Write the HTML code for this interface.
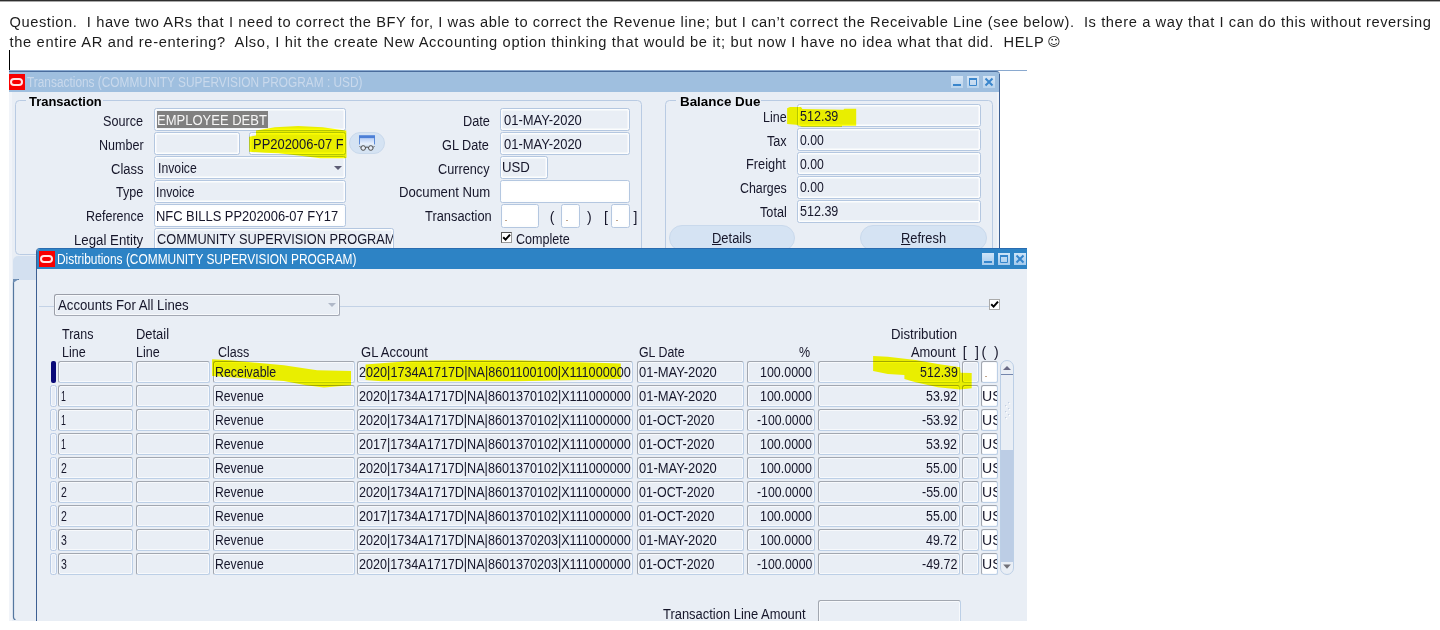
<!DOCTYPE html>
<html><head><meta charset="utf-8"><title>Question</title>
<style>
html,body{margin:0;padding:0;background:#fff;}
body{width:1440px;height:630px;overflow:hidden;position:relative;font-family:"Liberation Sans",sans-serif;font-size:14px;color:#000;}
.a{position:absolute;}
.q{position:absolute;left:9.5px;white-space:pre;font-size:14.67px;letter-spacing:0.586px;color:#1c1c1c;line-height:20px;}
.f{position:absolute;box-sizing:border-box;border:1px solid #b4c7e0;border-radius:2.5px;background:#e9eef5;box-shadow:inset 0 0 0 1.5px #fcfdfe;}
.f.wh{background:#fff;}
.f.t.dd{border-color:#9a9ea8 #a4a9b4 #a4a9b4 #9a9ea8;}
.f.t{border-color:#a2a7b0 #bccfe6 #bccfe6 #a2a7b0;box-shadow:inset 0 0 0 1px #f7f9fc;}
.x{position:absolute;white-space:pre;line-height:15px;height:15px;transform-origin:0 50%;color:#16162a;}
.c{position:absolute;overflow:hidden;height:15px;}
.b{font-weight:bold;color:#000;}
.g{position:absolute;box-sizing:border-box;border:1px solid #b9cbe3;border-radius:4.5px;}
.btn{position:absolute;box-sizing:border-box;height:26px;border-radius:13px;background:#d5e3f3;border:1px solid #c9d9ec;}
.tb{position:absolute;width:12px;height:12px;background:linear-gradient(#d6e6f6,#b9d3ec);}
.tb2{position:absolute;width:12px;height:12px;background:linear-gradient(#cfe5f8,#a3caed);}
.ora{position:absolute;width:15.5px;height:16px;background:#f80000;}
.ora i{position:absolute;left:1.2px;top:3.8px;width:9px;height:4.6px;border:2px solid #ffe4e4;border-radius:4.5px;}
</style></head><body>
<div class="a" style="left:0;top:0;width:1440px;height:1px;background:#2e2e2e"></div><div class="a" style="left:0;top:1px;width:1440px;height:1px;background:#a8a8a8"></div>
<div class="q" style="top:12px">Question.  I have two ARs that I need to correct the BFY for, I was able to correct the Revenue line; but I can’t correct the Receivable Line (see below).  Is there a way that I can do this without reversing</div>
<div class="q" style="top:31.5px;letter-spacing:0.666px">the entire AR and re-entering?  Also, I hit the create New Accounting option thinking that would be it; but now I have no idea what that did.  HELP <span style="font-family:'DejaVu Sans',sans-serif;font-size:12.8px;letter-spacing:0;line-height:10px;position:relative;top:-0.5px;left:-1.5px">☺</span></div>
<div class="a" style="left:9px;top:50px;width:1px;height:19.5px;background:#000"></div>
<div class="a" style="left:9px;top:70px;width:1018px;height:1px;background:#8aa9cf"></div>
<div class="a" style="left:9px;top:71px;width:991px;height:550px;background:#e9eef5;border-radius:0 4px 0 0;"></div>
<div class="a" style="left:9px;top:71px;width:991px;height:21px;background:#9fbfdf;border-radius:0 4px 0 0;border-top:1px solid #4a6c9c;box-sizing:border-box"></div>
<div class="a" style="left:999px;top:74px;width:1px;height:547px;background:#3d5f92"></div>
<div class="a" style="left:9px;top:92px;width:2.5px;height:529px;background:#f1f4f9"></div>
<div class="a" style="left:997px;top:92px;width:2px;height:529px;background:#f1f4f9"></div>
<div class="ora" style="left:9px;top:74px"><i></i></div>
<div class="tb" style="left:951px;top:76px"><svg width="12" height="12" viewBox="0 0 12 12" style="position:absolute;left:0;top:0"><rect x="2" y="8" width="8" height="2" fill="#3a86cc"/></svg></div>
<div class="tb" style="left:967px;top:76px"><svg width="12" height="12" viewBox="0 0 12 12" style="position:absolute;left:0;top:0"><path d="M2.5 2.5h7v7h-7z M2.5 3.5h7" fill="none" stroke="#3a86cc" stroke-width="1"/><rect x="2" y="2" width="8" height="2" fill="#3a86cc"/></svg></div>
<div class="tb" style="left:983px;top:76px"><svg width="12" height="12" viewBox="0 0 12 12" style="position:absolute;left:0;top:0"><path d="M2.5 2.5l7 7M9.5 2.5l-7 7" stroke="#3a86cc" stroke-width="2" fill="none"/></svg></div>
<div class="g" style="left:15px;top:100px;width:627px;height:155px"></div>
<div class="a" style="left:26px;top:95px;width:76.5px;height:12px;background:#e9eef5"></div>
<div class="g" style="left:665px;top:100px;width:328px;height:160px"></div>
<div class="a" style="left:676px;top:95px;width:84.5px;height:12px;background:#e9eef5"></div>
<div class="f " style="left:154px;top:108px;width:192px;height:23px"></div>
<div class="a" style="left:157px;top:111px;width:111px;height:17px;background:#808080"></div>
<div class="f " style="left:154px;top:132px;width:86px;height:23px"></div>
<div class="f " style="left:249px;top:132px;width:97px;height:23px"></div>
<div class="f " style="left:154px;top:156px;width:192px;height:23px"></div>
<div class="a" style="left:333.5px;top:166px;width:0;height:0;border-left:4px solid transparent;border-right:4px solid transparent;border-top:4.5px solid #5c5c74"></div>
<div class="f " style="left:154px;top:180px;width:192px;height:23px"></div>
<div class="f wh" style="left:154px;top:204px;width:192px;height:23px"></div>
<div class="f " style="left:154px;top:228px;width:240px;height:23px"></div>
<div class="btn" style="left:349px;top:132px;width:36px;height:22px;border-radius:11px"></div>
<svg class="a" style="left:357px;top:134px" width="20" height="19" viewBox="0 0 20 19"><defs><linearGradient id="lg" x1="0" y1="0" x2="0" y2="1"><stop offset="0" stop-color="#9fbef0"/><stop offset="1" stop-color="#eef4fd"/></linearGradient></defs><rect x="2" y="1.3" width="16" height="9.2" fill="url(#lg)"/><rect x="2" y="1.3" width="16" height="2.8" fill="#4c7fd6"/><path d="M2.5 4v6.5M17.5 4v6.5" stroke="#5b8ad8" stroke-width="1" fill="none"/><circle cx="6.2" cy="14" r="2.3" fill="#e8eef8" stroke="#4a4a4a" stroke-width="1"/><circle cx="13.8" cy="14" r="2.3" fill="#e8eef8" stroke="#4a4a4a" stroke-width="1"/><path d="M8.5 13.5q1.5-1 3 0M3.9 13.5L2.6 12.2M16.1 13.5l1.3-1.3" stroke="#4a4a4a" stroke-width="1" fill="none"/></svg>
<div class="f " style="left:500px;top:108px;width:130px;height:23px"></div>
<div class="f " style="left:500px;top:132px;width:130px;height:23px"></div>
<div class="f " style="left:500px;top:156px;width:48px;height:23px"></div>
<div class="f wh" style="left:500px;top:180px;width:130px;height:23px"></div>
<div class="f wh" style="left:501px;top:204px;width:38px;height:24px"></div>
<div class="f wh" style="left:561px;top:204px;width:19px;height:24px"></div>
<div class="f wh" style="left:611px;top:204px;width:19px;height:24px"></div>
<div class="a" style="left:504.5px;top:220px;width:2px;height:1.2px;background:#c0a58c"></div>
<div class="a" style="left:565.5px;top:220px;width:2px;height:1.2px;background:#c0a58c"></div>
<div class="a" style="left:615.5px;top:220px;width:2px;height:1.2px;background:#c0a58c"></div>
<div class="a" style="left:501px;top:232px;width:11px;height:11px;border:1px solid;border-color:#555 #999 #999 #555;background:#fff;box-sizing:border-box"><svg width="9" height="9" viewBox="0 0 9 9" style="position:absolute;left:0;top:0"><path d="M1.2 4.2L3.6 6.6L8 1.6" stroke="#000" stroke-width="2" fill="none"/></svg></div>
<div class="f " style="left:797px;top:104px;width:184px;height:23px"></div>
<div class="f " style="left:797px;top:128px;width:184px;height:23px"></div>
<div class="f " style="left:797px;top:152px;width:184px;height:23px"></div>
<div class="f " style="left:797px;top:176px;width:184px;height:23px"></div>
<div class="f " style="left:797px;top:200px;width:184px;height:23px"></div>
<div class="btn" style="left:669px;top:225px;width:126px"></div>
<div class="btn" style="left:860px;top:225px;width:127px"></div>
<div class="a" style="left:13px;top:256px;width:30px;height:24px;background:#d3e0f0;border-radius:5px 0 0 0"></div>
<svg class="a" style="left:12px;top:278px" width="26" height="344" viewBox="0 0 26 344"><path d="M7 1.5H3.5Q1.5 1.5 1.5 4V339Q1.5 341.5 3.5 341.5" fill="none" stroke="#55779f" stroke-width="1.2"/><path d="M1 1h6L1 5z" fill="#6f8fb5"/></svg>
<div class="a" style="left:36px;top:248px;width:991px;height:373px;background:#e9eef5;border-radius:4px 0 0 0;border-left:1px solid #3d5f92;border-top:1px solid #2a6cb0;box-sizing:border-box"></div>
<div class="a" style="left:37px;top:249px;width:990px;height:20px;background:#2d83c5;border-radius:3px 0 0 0"></div>
<div class="ora" style="left:39px;top:251px"><i></i></div>
<div class="tb2" style="left:982px;top:253px"><svg width="12" height="12" viewBox="0 0 12 12" style="position:absolute;left:0;top:0"><rect x="2" y="8" width="8" height="2" fill="#3585cc"/></svg></div>
<div class="tb2" style="left:998px;top:253px"><svg width="12" height="12" viewBox="0 0 12 12" style="position:absolute;left:0;top:0"><path d="M2.5 2.5h7v7h-7z M2.5 3.5h7" fill="none" stroke="#3585cc" stroke-width="1"/><rect x="2" y="2" width="8" height="2" fill="#3585cc"/></svg></div>
<div class="tb2" style="left:1014px;top:253px"><svg width="12" height="12" viewBox="0 0 12 12" style="position:absolute;left:0;top:0"><path d="M2.5 2.5l7 7M9.5 2.5l-7 7" stroke="#3585cc" stroke-width="2" fill="none"/></svg></div>
<div class="a" style="left:39px;top:306px;width:950px;height:1px;background:#c3d2e6"></div>
<div class="f t dd" style="left:54px;top:294px;width:286px;height:22px"></div>
<div class="a" style="left:328px;top:303px;width:0;height:0;border-left:4px solid transparent;border-right:4px solid transparent;border-top:4px solid #b0b8c8"></div>
<div class="a" style="left:989px;top:299px;width:11px;height:11px;border:1px solid;border-color:#aaa;background:#fff;box-sizing:border-box"><svg width="9" height="9" viewBox="0 0 9 9" style="position:absolute;left:0;top:0"><path d="M1.2 4.2L3.6 6.6L8 1.6" stroke="#000" stroke-width="2" fill="none"/></svg></div>
<div class="a" style="left:51px;top:361px;width:5px;height:22px;background:#0a0a78;border-radius:2px"></div>
<div class="f t" style="left:58px;top:361px;width:75px;height:22px"></div>
<div class="f t" style="left:136px;top:361px;width:74px;height:22px"></div>
<div class="f t" style="left:213px;top:361px;width:142px;height:22px"></div>
<div class="f t" style="left:357px;top:361px;width:275.5px;height:22px"></div>
<div class="f t" style="left:637px;top:361px;width:106.5px;height:22px"></div>
<div class="f t" style="left:747px;top:361px;width:67.5px;height:22px"></div>
<div class="f t" style="left:817.5px;top:361px;width:142.0px;height:22px"></div>
<div class="f t" style="left:962px;top:361px;width:17px;height:22px"></div>
<div class="f t wh" style="left:981px;top:361px;width:16.5px;height:22px"></div>
<div class="a" style="left:984.5px;top:376px;width:2px;height:1.2px;background:#c0a58c"></div>
<div class="a" style="left:50px;top:385px;width:7px;height:22px;background:#e6ecf5;border:1px solid #b9cbe5;border-radius:2.5px;box-sizing:border-box;box-shadow:inset 0 0 0 1px #f4f7fb"></div>
<div class="f t" style="left:58px;top:385px;width:75px;height:22px"></div>
<div class="f t" style="left:136px;top:385px;width:74px;height:22px"></div>
<div class="f t" style="left:213px;top:385px;width:142px;height:22px"></div>
<div class="f t" style="left:357px;top:385px;width:275.5px;height:22px"></div>
<div class="f t" style="left:637px;top:385px;width:106.5px;height:22px"></div>
<div class="f t" style="left:747px;top:385px;width:67.5px;height:22px"></div>
<div class="f t" style="left:817.5px;top:385px;width:142.0px;height:22px"></div>
<div class="f t" style="left:962px;top:385px;width:17px;height:22px"></div>
<div class="f t wh" style="left:981px;top:385px;width:16.5px;height:22px"></div>
<div class="a" style="left:50px;top:409px;width:7px;height:22px;background:#e6ecf5;border:1px solid #b9cbe5;border-radius:2.5px;box-sizing:border-box;box-shadow:inset 0 0 0 1px #f4f7fb"></div>
<div class="f t" style="left:58px;top:409px;width:75px;height:22px"></div>
<div class="f t" style="left:136px;top:409px;width:74px;height:22px"></div>
<div class="f t" style="left:213px;top:409px;width:142px;height:22px"></div>
<div class="f t" style="left:357px;top:409px;width:275.5px;height:22px"></div>
<div class="f t" style="left:637px;top:409px;width:106.5px;height:22px"></div>
<div class="f t" style="left:747px;top:409px;width:67.5px;height:22px"></div>
<div class="f t" style="left:817.5px;top:409px;width:142.0px;height:22px"></div>
<div class="f t" style="left:962px;top:409px;width:17px;height:22px"></div>
<div class="f t wh" style="left:981px;top:409px;width:16.5px;height:22px"></div>
<div class="a" style="left:50px;top:433px;width:7px;height:22px;background:#e6ecf5;border:1px solid #b9cbe5;border-radius:2.5px;box-sizing:border-box;box-shadow:inset 0 0 0 1px #f4f7fb"></div>
<div class="f t" style="left:58px;top:433px;width:75px;height:22px"></div>
<div class="f t" style="left:136px;top:433px;width:74px;height:22px"></div>
<div class="f t" style="left:213px;top:433px;width:142px;height:22px"></div>
<div class="f t" style="left:357px;top:433px;width:275.5px;height:22px"></div>
<div class="f t" style="left:637px;top:433px;width:106.5px;height:22px"></div>
<div class="f t" style="left:747px;top:433px;width:67.5px;height:22px"></div>
<div class="f t" style="left:817.5px;top:433px;width:142.0px;height:22px"></div>
<div class="f t" style="left:962px;top:433px;width:17px;height:22px"></div>
<div class="f t wh" style="left:981px;top:433px;width:16.5px;height:22px"></div>
<div class="a" style="left:50px;top:457px;width:7px;height:22px;background:#e6ecf5;border:1px solid #b9cbe5;border-radius:2.5px;box-sizing:border-box;box-shadow:inset 0 0 0 1px #f4f7fb"></div>
<div class="f t" style="left:58px;top:457px;width:75px;height:22px"></div>
<div class="f t" style="left:136px;top:457px;width:74px;height:22px"></div>
<div class="f t" style="left:213px;top:457px;width:142px;height:22px"></div>
<div class="f t" style="left:357px;top:457px;width:275.5px;height:22px"></div>
<div class="f t" style="left:637px;top:457px;width:106.5px;height:22px"></div>
<div class="f t" style="left:747px;top:457px;width:67.5px;height:22px"></div>
<div class="f t" style="left:817.5px;top:457px;width:142.0px;height:22px"></div>
<div class="f t" style="left:962px;top:457px;width:17px;height:22px"></div>
<div class="f t wh" style="left:981px;top:457px;width:16.5px;height:22px"></div>
<div class="a" style="left:50px;top:481px;width:7px;height:22px;background:#e6ecf5;border:1px solid #b9cbe5;border-radius:2.5px;box-sizing:border-box;box-shadow:inset 0 0 0 1px #f4f7fb"></div>
<div class="f t" style="left:58px;top:481px;width:75px;height:22px"></div>
<div class="f t" style="left:136px;top:481px;width:74px;height:22px"></div>
<div class="f t" style="left:213px;top:481px;width:142px;height:22px"></div>
<div class="f t" style="left:357px;top:481px;width:275.5px;height:22px"></div>
<div class="f t" style="left:637px;top:481px;width:106.5px;height:22px"></div>
<div class="f t" style="left:747px;top:481px;width:67.5px;height:22px"></div>
<div class="f t" style="left:817.5px;top:481px;width:142.0px;height:22px"></div>
<div class="f t" style="left:962px;top:481px;width:17px;height:22px"></div>
<div class="f t wh" style="left:981px;top:481px;width:16.5px;height:22px"></div>
<div class="a" style="left:50px;top:505px;width:7px;height:22px;background:#e6ecf5;border:1px solid #b9cbe5;border-radius:2.5px;box-sizing:border-box;box-shadow:inset 0 0 0 1px #f4f7fb"></div>
<div class="f t" style="left:58px;top:505px;width:75px;height:22px"></div>
<div class="f t" style="left:136px;top:505px;width:74px;height:22px"></div>
<div class="f t" style="left:213px;top:505px;width:142px;height:22px"></div>
<div class="f t" style="left:357px;top:505px;width:275.5px;height:22px"></div>
<div class="f t" style="left:637px;top:505px;width:106.5px;height:22px"></div>
<div class="f t" style="left:747px;top:505px;width:67.5px;height:22px"></div>
<div class="f t" style="left:817.5px;top:505px;width:142.0px;height:22px"></div>
<div class="f t" style="left:962px;top:505px;width:17px;height:22px"></div>
<div class="f t wh" style="left:981px;top:505px;width:16.5px;height:22px"></div>
<div class="a" style="left:50px;top:529px;width:7px;height:22px;background:#e6ecf5;border:1px solid #b9cbe5;border-radius:2.5px;box-sizing:border-box;box-shadow:inset 0 0 0 1px #f4f7fb"></div>
<div class="f t" style="left:58px;top:529px;width:75px;height:22px"></div>
<div class="f t" style="left:136px;top:529px;width:74px;height:22px"></div>
<div class="f t" style="left:213px;top:529px;width:142px;height:22px"></div>
<div class="f t" style="left:357px;top:529px;width:275.5px;height:22px"></div>
<div class="f t" style="left:637px;top:529px;width:106.5px;height:22px"></div>
<div class="f t" style="left:747px;top:529px;width:67.5px;height:22px"></div>
<div class="f t" style="left:817.5px;top:529px;width:142.0px;height:22px"></div>
<div class="f t" style="left:962px;top:529px;width:17px;height:22px"></div>
<div class="f t wh" style="left:981px;top:529px;width:16.5px;height:22px"></div>
<div class="a" style="left:50px;top:553px;width:7px;height:22px;background:#e6ecf5;border:1px solid #b9cbe5;border-radius:2.5px;box-sizing:border-box;box-shadow:inset 0 0 0 1px #f4f7fb"></div>
<div class="f t" style="left:58px;top:553px;width:75px;height:22px"></div>
<div class="f t" style="left:136px;top:553px;width:74px;height:22px"></div>
<div class="f t" style="left:213px;top:553px;width:142px;height:22px"></div>
<div class="f t" style="left:357px;top:553px;width:275.5px;height:22px"></div>
<div class="f t" style="left:637px;top:553px;width:106.5px;height:22px"></div>
<div class="f t" style="left:747px;top:553px;width:67.5px;height:22px"></div>
<div class="f t" style="left:817.5px;top:553px;width:142.0px;height:22px"></div>
<div class="f t" style="left:962px;top:553px;width:17px;height:22px"></div>
<div class="f t wh" style="left:981px;top:553px;width:16.5px;height:22px"></div>
<div class="a" style="left:1000px;top:360px;width:14px;height:215px;background:#e9eef5;border:1px solid #bccfe6;border-radius:7px;box-sizing:border-box;overflow:hidden"><div class="a" style="left:0;top:89px;width:12px;height:112px;background:#bccde5"></div><div class="a" style="left:0;top:13px;width:12px;height:1px;background:#7486ad"></div></div>
<svg class="a" style="left:1000px;top:360px" width="14" height="215" viewBox="0 0 14 215"><path d="M3 10L7 6L11 10z" fill="#6a6a86"/><path d="M3.2 204.5h7.6L7 208.7z" fill="#707078"/><g fill="#c3cfe2"><rect x="8" y="42" width="1.2" height="1.2"/><rect x="5" y="45" width="1.2" height="1.2"/><rect x="8" y="48" width="1.2" height="1.2"/><rect x="5" y="51" width="1.2" height="1.2"/><rect x="8" y="54" width="1.2" height="1.2"/><rect x="5" y="57" width="1.2" height="1.2"/></g><g fill="#ffffff"><rect x="9" y="43" width="1.2" height="1.2"/><rect x="6" y="46" width="1.2" height="1.2"/><rect x="9" y="49" width="1.2" height="1.2"/><rect x="6" y="52" width="1.2" height="1.2"/><rect x="9" y="55" width="1.2" height="1.2"/><rect x="6" y="58" width="1.2" height="1.2"/></g></svg>
<div class="f t" style="left:817.5px;top:600px;width:143.5px;height:32px"></div>
<svg class="a" style="left:0;top:0;mix-blend-mode:multiply" width="1440" height="630" viewBox="0 0 1440 630"><g fill="#ffff00"><polygon points="256,130.5 274.9,127.2 298.2,126.1 322.7,127.2 345.4,130.5 346.3,130.5 346.5,157.8 345.4,158.3 320.4,158.3 298.2,155.5 278.2,153.3 264.9,152.8 249.3,151.7 249.1,136.7 256,135.5"/><polygon points="787.1,108.3 789.9,107 801,107 802.4,109.1 843.4,109.8 844.4,108.8 856.2,108.8 856.2,125.8 842,125.8 842,126.8 801.7,126.8 798.9,125.4 796.1,124.7 787.1,124"/><polygon points="212.1,359.2 230.4,360.3 283.8,365.3 317.1,370.3 351,371.1 351,385.3 323.8,387.6 306,385.3 283.8,380.9 250.4,378.7 228.2,377 212.1,375.9"/><polygon points="365.6,364.5 412.5,360.8 466.7,359.9 516.7,360.3 558.3,361.4 620.8,363.5 620.8,379.1 579.2,380.1 516.7,381.2 433.3,381.2 381.3,381.2 365.6,380.1"/><polygon points="873.1,356.1 887.8,356.7 915.6,360 937.8,363.9 960,367.2 960.6,372.8 971.7,373.1 971.7,388.3 960,389.4 937.8,387.2 915.6,382.2 904.4,378.9 904.4,375 887.8,373.9 873.1,371.1"/></g></svg>
<span class="x" style="left:26.8px;top:75.0px;transform:scaleX(0.8480);color:#c9d9ec;">Transactions (COMMUNITY SUPERVISION PROGRAM : USD)</span>
<span class="x b" style="left:29.2px;top:94.0px;transform:scaleX(0.9744);font-size:13.3px;">Transaction</span>
<span class="x b" style="left:679.6px;top:94.0px;transform:scaleX(1.0073);font-size:13.3px;">Balance Due</span>
<span class="x" style="left:103.4px;top:114.0px;transform:scaleX(0.9019);">Source</span>
<span class="x" style="left:98.7px;top:138.0px;transform:scaleX(0.8956);">Number</span>
<span class="x" style="left:111.1px;top:162.0px;transform:scaleX(0.9284);">Class</span>
<span class="x" style="left:116.2px;top:185.0px;transform:scaleX(0.8964);">Type</span>
<span class="x" style="left:85.7px;top:209.0px;transform:scaleX(0.8933);">Reference</span>
<span class="x" style="left:74.4px;top:233.0px;transform:scaleX(0.9465);">Legal Entity</span>
<span class="x" style="left:156.9px;top:113.0px;transform:scaleX(0.9295);color:#f6f6f6;">EMPLOYEE DEBT</span>
<div class="c" style="left:250px;top:137.0px;width:93px"><span class="x" style="left:3.0px;top:0;transform:scaleX(0.9240);">PP202006-07 FY17</span></div>
<span class="x" style="left:158.4px;top:161.0px;transform:scaleX(0.8744);">Invoice</span>
<span class="x" style="left:156.4px;top:185.0px;transform:scaleX(0.8698);">Invoice</span>
<span class="x" style="left:156.4px;top:209.0px;transform:scaleX(0.9214);">NFC BILLS PP202006-07 FY17</span>
<div class="c" style="left:155px;top:232.0px;width:237.5px"><span class="x" style="left:2.3px;top:0;transform:scaleX(0.9115);">COMMUNITY SUPERVISION PROGRAM</span></div>
<span class="x" style="left:462.7px;top:114.0px;transform:scaleX(0.9102);">Date</span>
<span class="x" style="left:442.3px;top:138.0px;transform:scaleX(0.9073);">GL Date</span>
<span class="x" style="left:438.3px;top:162.0px;transform:scaleX(0.9068);">Currency</span>
<span class="x" style="left:399.2px;top:185.0px;transform:scaleX(0.9384);">Document Num</span>
<span class="x" style="left:424.5px;top:209.0px;transform:scaleX(0.9187);">Transaction</span>
<span class="x" style="left:503.5px;top:113.0px;transform:scaleX(0.9256);">01-MAY-2020</span>
<span class="x" style="left:503.5px;top:137.0px;transform:scaleX(0.9256);">01-MAY-2020</span>
<span class="x" style="left:502.1px;top:160.0px;transform:scaleX(0.9421);">USD</span>
<span class="x" style="left:549.8px;top:210.0px;transform:scaleX(1.0000);">(</span>
<span class="x" style="left:587.1px;top:210.0px;transform:scaleX(1.0000);">)</span>
<span class="x" style="left:604.1px;top:210.0px;transform:scaleX(1.0000);">[</span>
<span class="x" style="left:633.5px;top:210.0px;transform:scaleX(1.0000);">]</span>
<span class="x" style="left:515.5px;top:232.0px;transform:scaleX(0.8980);">Complete</span>
<span class="x" style="left:762.5px;top:110.0px;transform:scaleX(0.8917);">Line</span>
<span class="x" style="left:766.6px;top:134.0px;transform:scaleX(0.9042);">Tax</span>
<span class="x" style="left:746.4px;top:157.0px;transform:scaleX(0.9137);">Freight</span>
<span class="x" style="left:739.5px;top:181.0px;transform:scaleX(0.8844);">Charges</span>
<span class="x" style="left:759.6px;top:205.0px;transform:scaleX(0.9063);">Total</span>
<span class="x" style="left:800.3px;top:109.0px;transform:scaleX(0.8946);">512.39</span>
<span class="x" style="left:800.3px;top:133.0px;transform:scaleX(0.8739);">0.00</span>
<span class="x" style="left:800.3px;top:157.0px;transform:scaleX(0.8739);">0.00</span>
<span class="x" style="left:800.3px;top:180.0px;transform:scaleX(0.8739);">0.00</span>
<span class="x" style="left:800.3px;top:204.0px;transform:scaleX(0.8946);">512.39</span>
<span class="x" style="left:712.1px;top:231.0px;transform:scaleX(0.9236);"><u>D</u>etails</span>
<span class="x" style="left:900.9px;top:231.0px;transform:scaleX(0.9188);"><u>R</u>efresh</span>
<span class="x" style="left:57.3px;top:252.0px;transform:scaleX(0.8512);color:#fff;">Distributions (COMMUNITY SUPERVISION PROGRAM)</span>
<span class="x" style="left:58.0px;top:298.0px;transform:scaleX(0.9434);">Accounts For All Lines</span>
<span class="x" style="left:61.9px;top:327.0px;transform:scaleX(0.8904);">Trans</span>
<span class="x" style="left:61.6px;top:345.0px;transform:scaleX(0.8955);">Line</span>
<span class="x" style="left:135.6px;top:327.0px;transform:scaleX(0.9227);">Detail</span>
<span class="x" style="left:135.6px;top:345.0px;transform:scaleX(0.8955);">Line</span>
<span class="x" style="left:217.5px;top:345.0px;transform:scaleX(0.8941);">Class</span>
<span class="x" style="left:361.3px;top:345.0px;transform:scaleX(0.9309);">GL Account</span>
<span class="x" style="left:638.8px;top:345.0px;transform:scaleX(0.8825);">GL Date</span>
<span class="x" style="left:798.8px;top:345.0px;transform:scaleX(0.8917);">%</span>
<span class="x" style="left:890.7px;top:327.0px;transform:scaleX(0.9437);">Distribution</span>
<span class="x" style="left:911.2px;top:345.0px;transform:scaleX(0.9223);">Amount</span>
<span class="x" style="left:962.8px;top:345.0px;transform:scaleX(1.0000);">[</span>
<span class="x" style="left:975.0px;top:345.0px;transform:scaleX(1.0000);">]</span>
<span class="x" style="left:981.5px;top:345.0px;transform:scaleX(1.0000);">(</span>
<span class="x" style="left:994.0px;top:345.0px;transform:scaleX(1.0000);">)</span>
<span class="x" style="left:214.9px;top:365.0px;transform:scaleX(0.8835);">Receivable</span>
<span class="x" style="left:358.7px;top:365.0px;transform:scaleX(0.9029);">2020|1734A1717D|NA|8601100100|X111000000</span>
<span class="x" style="left:639.3px;top:365.0px;transform:scaleX(0.9256);">01-MAY-2020</span>
<span class="x" style="left:759.9px;top:365.0px;transform:scaleX(0.8888);">100.0000</span>
<span class="x" style="left:919.5px;top:365.0px;transform:scaleX(0.8830);">512.39</span>
<span class="x" style="left:60.7px;top:389.0px;transform:scaleX(0.6286);">1</span>
<span class="x" style="left:214.6px;top:389.0px;transform:scaleX(0.8687);">Revenue</span>
<span class="x" style="left:358.7px;top:389.0px;transform:scaleX(0.8998);">2020|1734A1717D|NA|8601370102|X111000000</span>
<span class="x" style="left:639.3px;top:389.0px;transform:scaleX(0.9256);">01-MAY-2020</span>
<span class="x" style="left:759.9px;top:389.0px;transform:scaleX(0.8888);">100.0000</span>
<span class="x" style="left:926.3px;top:389.0px;transform:scaleX(0.8852);">53.92</span>
<div class="c" style="left:982px;top:389.0px;width:14.5px"><span class="x" style="left:0.3px;top:0;transform:scaleX(1.0050);">US</span></div>
<span class="x" style="left:60.7px;top:413.0px;transform:scaleX(0.6286);">1</span>
<span class="x" style="left:214.6px;top:413.0px;transform:scaleX(0.8687);">Revenue</span>
<span class="x" style="left:358.7px;top:413.0px;transform:scaleX(0.8998);">2020|1734A1717D|NA|8601370102|X111000000</span>
<span class="x" style="left:639.3px;top:413.0px;transform:scaleX(0.8879);">01-OCT-2020</span>
<span class="x" style="left:756.5px;top:413.0px;transform:scaleX(0.8772);">-100.0000</span>
<span class="x" style="left:922.0px;top:413.0px;transform:scaleX(0.8895);">-53.92</span>
<div class="c" style="left:982px;top:413.0px;width:14.5px"><span class="x" style="left:0.3px;top:0;transform:scaleX(1.0050);">US</span></div>
<span class="x" style="left:60.7px;top:437.0px;transform:scaleX(0.6286);">1</span>
<span class="x" style="left:214.6px;top:437.0px;transform:scaleX(0.8687);">Revenue</span>
<span class="x" style="left:358.7px;top:437.0px;transform:scaleX(0.8998);">2017|1734A1717D|NA|8601370102|X111000000</span>
<span class="x" style="left:639.3px;top:437.0px;transform:scaleX(0.8879);">01-OCT-2020</span>
<span class="x" style="left:759.9px;top:437.0px;transform:scaleX(0.8888);">100.0000</span>
<span class="x" style="left:926.3px;top:437.0px;transform:scaleX(0.8852);">53.92</span>
<div class="c" style="left:982px;top:437.0px;width:14.5px"><span class="x" style="left:0.3px;top:0;transform:scaleX(1.0050);">US</span></div>
<span class="x" style="left:60.6px;top:461.0px;transform:scaleX(0.7500);">2</span>
<span class="x" style="left:214.6px;top:461.0px;transform:scaleX(0.8687);">Revenue</span>
<span class="x" style="left:358.7px;top:461.0px;transform:scaleX(0.8998);">2020|1734A1717D|NA|8601370102|X111000000</span>
<span class="x" style="left:639.3px;top:461.0px;transform:scaleX(0.9256);">01-MAY-2020</span>
<span class="x" style="left:759.9px;top:461.0px;transform:scaleX(0.8888);">100.0000</span>
<span class="x" style="left:926.3px;top:461.0px;transform:scaleX(0.8852);">55.00</span>
<div class="c" style="left:982px;top:461.0px;width:14.5px"><span class="x" style="left:0.3px;top:0;transform:scaleX(1.0050);">US</span></div>
<span class="x" style="left:60.6px;top:485.0px;transform:scaleX(0.7500);">2</span>
<span class="x" style="left:214.6px;top:485.0px;transform:scaleX(0.8687);">Revenue</span>
<span class="x" style="left:358.7px;top:485.0px;transform:scaleX(0.8998);">2020|1734A1717D|NA|8601370102|X111000000</span>
<span class="x" style="left:639.3px;top:485.0px;transform:scaleX(0.8879);">01-OCT-2020</span>
<span class="x" style="left:756.5px;top:485.0px;transform:scaleX(0.8772);">-100.0000</span>
<span class="x" style="left:922.0px;top:485.0px;transform:scaleX(0.8895);">-55.00</span>
<div class="c" style="left:982px;top:485.0px;width:14.5px"><span class="x" style="left:0.3px;top:0;transform:scaleX(1.0050);">US</span></div>
<span class="x" style="left:60.6px;top:509.0px;transform:scaleX(0.7500);">2</span>
<span class="x" style="left:214.6px;top:509.0px;transform:scaleX(0.8687);">Revenue</span>
<span class="x" style="left:358.7px;top:509.0px;transform:scaleX(0.8998);">2017|1734A1717D|NA|8601370102|X111000000</span>
<span class="x" style="left:639.3px;top:509.0px;transform:scaleX(0.8879);">01-OCT-2020</span>
<span class="x" style="left:759.9px;top:509.0px;transform:scaleX(0.8888);">100.0000</span>
<span class="x" style="left:926.3px;top:509.0px;transform:scaleX(0.8852);">55.00</span>
<div class="c" style="left:982px;top:509.0px;width:14.5px"><span class="x" style="left:0.3px;top:0;transform:scaleX(1.0050);">US</span></div>
<span class="x" style="left:60.6px;top:533.0px;transform:scaleX(0.7500);">3</span>
<span class="x" style="left:214.6px;top:533.0px;transform:scaleX(0.8687);">Revenue</span>
<span class="x" style="left:358.7px;top:533.0px;transform:scaleX(0.8998);">2020|1734A1717D|NA|8601370203|X111000000</span>
<span class="x" style="left:639.3px;top:533.0px;transform:scaleX(0.9256);">01-MAY-2020</span>
<span class="x" style="left:759.9px;top:533.0px;transform:scaleX(0.8888);">100.0000</span>
<span class="x" style="left:926.3px;top:533.0px;transform:scaleX(0.8852);">49.72</span>
<div class="c" style="left:982px;top:533.0px;width:14.5px"><span class="x" style="left:0.3px;top:0;transform:scaleX(1.0050);">US</span></div>
<span class="x" style="left:60.6px;top:557.0px;transform:scaleX(0.7500);">3</span>
<span class="x" style="left:214.6px;top:557.0px;transform:scaleX(0.8687);">Revenue</span>
<span class="x" style="left:358.7px;top:557.0px;transform:scaleX(0.8998);">2020|1734A1717D|NA|8601370203|X111000000</span>
<span class="x" style="left:639.3px;top:557.0px;transform:scaleX(0.8879);">01-OCT-2020</span>
<span class="x" style="left:756.5px;top:557.0px;transform:scaleX(0.8772);">-100.0000</span>
<span class="x" style="left:922.0px;top:557.0px;transform:scaleX(0.8895);">-49.72</span>
<div class="c" style="left:982px;top:557.0px;width:14.5px"><span class="x" style="left:0.3px;top:0;transform:scaleX(1.0050);">US</span></div>
<span class="x" style="left:663.1px;top:607.0px;transform:scaleX(0.9238);">Transaction Line Amount</span>
<div class="a" style="left:0;top:621px;width:1440px;height:9px;background:#fff"></div>
<div class="a" style="left:1027px;top:60px;width:413px;height:570px;background:#fff"></div>
</body></html>
